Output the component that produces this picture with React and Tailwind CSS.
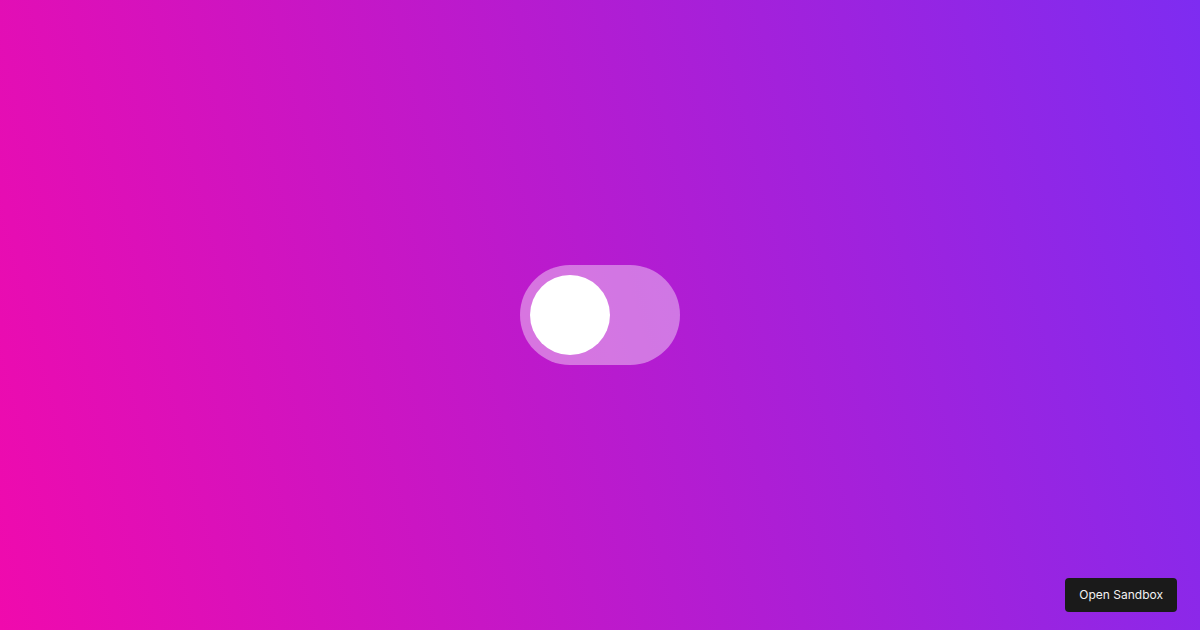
export default function App() {
  return (
    <div
      className="relative w-full h-screen flex items-center justify-center bg-[linear-gradient(75deg,#f00aad,#7e2cf1)]"
      style={{ fontFamily: "Inter, 'Noto Sans', sans-serif" }}
    >
      <div className="w-[160px] h-[100px] rounded-full bg-white/40 p-[10px] flex items-center justify-start cursor-pointer">
        <div className="w-[80px] h-[80px] rounded-full bg-white" />
      </div>
      <button className="absolute right-[23px] bottom-[18px] h-[34px] px-[14px] rounded-[4px] bg-[#1a1a1a] text-[#f2f2f2] text-[12px]">
        Open Sandbox
      </button>
    </div>
  );
}
